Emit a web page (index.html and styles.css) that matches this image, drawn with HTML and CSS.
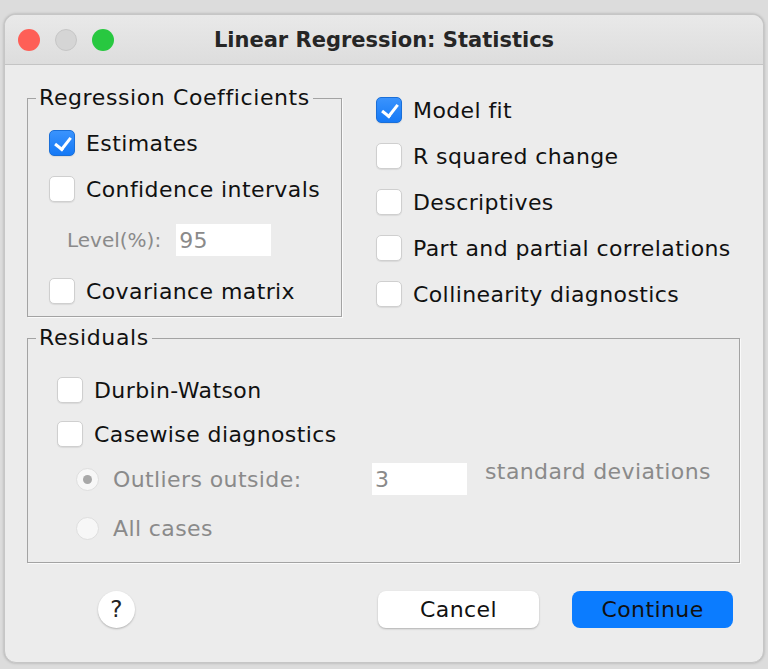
FILE: index.html
```html
<!DOCTYPE html>
<html lang="en">
<head>
  <meta charset="UTF-8">
  <title>Linear Regression: Statistics</title>
  <link rel="stylesheet" href="styles.css">
</head>
<body>
  <div class="window">
    <div class="titlebar">
      <div class="lights">
        <span class="light red"></span>
        <span class="light gray"></span>
        <span class="light green"></span>
      </div>
      <div class="title">Linear Regression: Statistics</div>
    </div>

    <div class="content">
      <div class="top">
        <fieldset class="group coeffs">
          <legend>Regression Coefficients</legend>
          <div class="row">
            <span class="check on"></span>
            <span class="label">Estimates</span>
          </div>
          <div class="row">
            <span class="check"></span>
            <span class="label">Confidence intervals</span>
          </div>
          <div class="row level">
            <span class="label dim">Level(%):</span>
            <span class="field dim">95</span>
          </div>
          <div class="row">
            <span class="check"></span>
            <span class="label">Covariance matrix</span>
          </div>
        </fieldset>

        <div class="options">
          <div class="row">
            <span class="check on"></span>
            <span class="label">Model fit</span>
          </div>
          <div class="row">
            <span class="check"></span>
            <span class="label">R squared change</span>
          </div>
          <div class="row">
            <span class="check"></span>
            <span class="label">Descriptives</span>
          </div>
          <div class="row">
            <span class="check"></span>
            <span class="label">Part and partial correlations</span>
          </div>
          <div class="row">
            <span class="check"></span>
            <span class="label">Collinearity diagnostics</span>
          </div>
        </div>
      </div>

      <fieldset class="group residuals">
        <legend>Residuals</legend>
        <div class="row">
          <span class="check"></span>
          <span class="label">Durbin-Watson</span>
        </div>
        <div class="row">
          <span class="check"></span>
          <span class="label">Casewise diagnostics</span>
        </div>
        <div class="row sub">
          <span class="radio on"></span>
          <span class="label dim outliers">Outliers outside:</span>
          <span class="field dim">3</span>
          <span class="label dim sd">standard deviations</span>
        </div>
        <div class="row sub">
          <span class="radio"></span>
          <span class="label dim">All cases</span>
        </div>
      </fieldset>

      <div class="buttons">
        <span class="help">?</span>
        <span class="spacer"></span>
        <span class="btn">Cancel</span>
        <span class="btn primary">Continue</span>
      </div>
    </div>
  </div>
</body>
</html>
```

FILE: styles.css
```css
html * {
  font-family: "DejaVu Sans", Verdana, sans-serif;
  box-sizing: border-box;
}

body {
  margin: 0;
  background: #dcdcdc;
  height: 669px;
  overflow: hidden;
}

.window {
  margin: 14px 0 0 4px;
  width: 760px;
  height: 649px;
  background: #ececec;
  border: 1px solid #c6c6c6;
  border-radius: 12px;
  box-shadow: 0 0 3px rgba(0, 0, 0, 0.25);
  overflow: hidden;
  display: flex;
  flex-direction: column;
}

.titlebar {
  height: 50px;
  background: linear-gradient(#e9e9e9, #dddddd);
  border-bottom: 1px solid #c4c4c4;
  display: flex;
  align-items: center;
  position: relative;
}

.lights {
  display: flex;
  gap: 15px;
  padding-left: 13px;
}

.light {
  width: 22px;
  height: 22px;
  border-radius: 50%;
}

.red { background: #fe5f57; }
.gray { background: #d5d5d5; border: 1px solid #c6c6c6; }
.green { background: #28c840; }

.title {
  position: absolute;
  left: 0;
  right: 0;
  text-align: center;
  font-weight: bold;
  font-size: 21px;
  color: #262626;
}

.content {
  padding: 0 0 0 22px;
  color: #111;
  font-size: 22px;
  letter-spacing: 0.4px;
}

.top {
  display: flex;
  gap: 34px;
}

.group {
  margin: 0;
  border: 1px solid #a3a3a3;
  box-shadow: 1px 1px 0 #fafafa;
  padding: 0;
}

.group legend {
  font-size: 22px;
  line-height: 26px;
  padding: 0 3px;
  margin-left: 8px;
  color: #111;
  letter-spacing: 0.6px;
}

.coeffs {
  margin-top: 20px;
  width: 315px;
  padding: 9px 0 1px 0;
}

.row {
  display: flex;
  align-items: center;
  height: 46px;
}

.coeffs .row {
  margin-left: 21px;
}

.check {
  width: 26px;
  height: 26px;
  border-radius: 5px;
  background: #fff;
  border: 1px solid #cfcfcf;
  box-shadow: 0 1px 1px rgba(0, 0, 0, 0.08);
  margin-right: 11px;
  flex: none;
  position: relative;
}

.check.on {
  background: linear-gradient(#3a93fd, #1579f6);
  border-color: #1a6fd8;
}

.check.on::after {
  content: "";
  position: absolute;
  left: 8px;
  top: 3px;
  width: 7px;
  height: 13px;
  border: solid #fff;
  border-width: 0 3.5px 3.5px 0;
  transform: rotate(38deg);
}

.coeffs .row.level {
  height: 56px;
  margin-left: 39px;
}

.level .label {
  font-size: 20px;
  letter-spacing: 0;
}

.dim {
  color: #8a8a8a;
}

.field {
  background: #fff;
  width: 95px;
  height: 32px;
  line-height: 34px;
  padding-left: 3px;
  font-size: 22px;
}

.level .field {
  margin-left: 15px;
}

.options {
  margin-top: 22px;
}

.residuals {
  width: 713px;
  margin-top: 8px;
  height: 238px;
  padding: 17px 0 0 0;
}

.residuals .row {
  height: 44px;
  margin-left: 29px;
}

.residuals .row.sub {
  margin-left: 48px;
  height: 46px;
}

.residuals .row.sub + .row.sub {
  margin-top: 3px;
}

.radio {
  width: 23px;
  height: 23px;
  border-radius: 50%;
  background: #f7f7f7;
  border: 1px solid #dedede;
  margin-right: 14px;
  position: relative;
  flex: none;
}

.radio.on::after {
  content: "";
  position: absolute;
  left: 6px;
  top: 6px;
  width: 9px;
  height: 9px;
  border-radius: 50%;
  background: #a8a8a8;
}

.outliers {
  width: 259px;
}

.sd {
  margin-left: 18px;
  align-self: flex-start;
  margin-top: 3px;
}

.buttons {
  display: flex;
  align-items: center;
  margin-top: 28px;
  padding-right: 30px;
}

.help {
  width: 37px;
  height: 37px;
  border-radius: 50%;
  background: #fff;
  box-shadow: 0 1px 2px rgba(0, 0, 0, 0.25);
  margin-left: 71px;
  text-align: center;
  line-height: 37px;
  font-size: 23px;
  color: #222;
}

.spacer {
  flex: 1;
}

.btn {
  width: 161px;
  height: 37px;
  border-radius: 8px;
  background: #fff;
  box-shadow: 0 1px 2px rgba(0, 0, 0, 0.25);
  text-align: center;
  line-height: 37px;
  font-size: 22px;
  color: #111;
}

.btn.primary {
  margin-left: 33px;
  background: #0b7cff;
  box-shadow: none;
}
```
